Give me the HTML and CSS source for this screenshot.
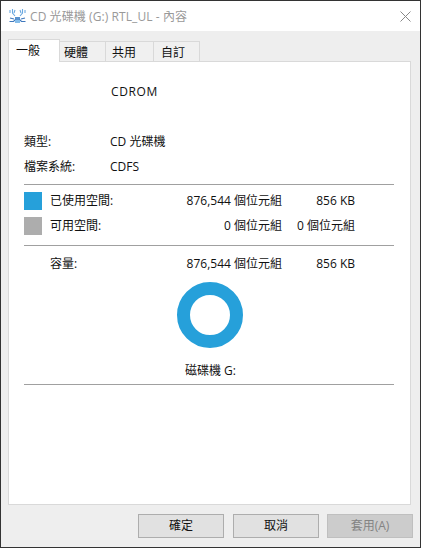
FILE: index.html
```html
<!DOCTYPE html>
<html lang="zh-Hant">
<head>
    <meta charset="UTF-8">
    <meta name="viewport" content="width=device-width, initial-scale=1.0">
    <title>CD 光碟機 (G:) RTL_UL - 內容</title>
    <link rel="stylesheet" href="styles.css">
</head>
<body>

<div class="window">
    <!-- Title bar -->
    <div class="titlebar">
        <svg class="app-icon" width="17" height="15" viewBox="0 0 17 15">
            <path d="M3.5 0v4l2.5 3M13.5 0v4l-2.5 3M1 1v3M16 1v3M6 1l-1 3M11 1l1 3" fill="none" stroke="#6aa8e0" stroke-width="1.1"/>
            <path d="M6 8h5v3h-5z" fill="#5b93cf"/>
            <path d="M0.5 12.5h4l2-2M16.5 12.5h-4l-2-2M1 9l4 1M16 9l-4 1" fill="none" stroke="#3f78bd" stroke-width="1.1"/>
            <rect x="6" y="11" width="5" height="3" fill="#86bdea"/>
        </svg>
        <span class="title">CD 光碟機 (G:) RTL_UL - 內容</span>
        <svg class="close" width="11" height="11" viewBox="0 0 11 11">
            <path d="M0.5 0.5l10 10M10.5 0.5l-10 10" stroke="#888" stroke-width="1" fill="none"/>
        </svg>
    </div>

    <div class="dialog">
        <!-- Tabs -->
        <div class="tabs">
            <div class="tab active">一般</div>
            <div class="tab">硬體</div>
            <div class="tab">共用</div>
            <div class="tab">自訂</div>
        </div>

        <div class="panel">
            <div class="name">CDROM</div>

            <div class="info-row"><span class="info-label">類型:</span><span>CD 光碟機</span></div>
            <div class="info-row fs"><span class="info-label">檔案系統:</span><span>CDFS</span></div>

            <div class="rule"></div>

            <div class="space-row">
                <span class="swatch used"></span>
                <span class="space-label">已使用空間:</span>
                <span class="bytes">876,544 個位元組</span>
                <span class="size">856 KB</span>
            </div>
            <div class="space-row">
                <span class="swatch free"></span>
                <span class="space-label">可用空間:</span>
                <span class="bytes">0 個位元組</span>
                <span class="size">0 個位元組</span>
            </div>

            <div class="rule rule-total"></div>

            <div class="space-row total-row">
                <span class="swatch blank"></span>
                <span class="space-label">容量:</span>
                <span class="bytes">876,544 個位元組</span>
                <span class="size">856 KB</span>
            </div>

            <div class="donut-wrap"><div class="donut"></div></div>
            <div class="drive">磁碟機 G:</div>
            <div class="rule rule-drive"></div>
        </div>

        <!-- Buttons -->
        <div class="buttons">
            <div class="btn">確定</div>
            <div class="btn">取消</div>
            <div class="btn disabled">套用(A)</div>
        </div>
    </div>
</div>

</body>
</html>
```

FILE: styles.css
```css
html, body {
    margin: 0;
    height: 100%;
    background-color: #333;
}
body {
    font-family: "Open Sans", "Noto Sans CJK TC", sans-serif;
    font-size: 12px;
    color: #111;
    overflow: hidden;
}
.window {
    box-sizing: border-box;
    width: 421px;
    height: 548px;
    padding: 1px 1px 1px 1px;
    display: flex;
    flex-direction: column;
}
.titlebar {
    height: 30px;
    flex: none;
    background: #fff;
    display: flex;
    align-items: center;
    padding: 0 9px 0 8px;
}
.app-icon {
    margin-right: 4px;
}
.title {
    flex: 1;
    color: #999;
    letter-spacing: 0.08px;
}
.dialog {
    flex: 1;
    display: flex;
    flex-direction: column;
    background: #eee;
    padding: 8px 9px 0 7px;
}
.tabs {
    display: flex;
    height: 22px;
    align-items: flex-end;
}
.tab {
    box-sizing: border-box;
    height: 20px;
    width: 46px;
    padding-left: 4px;
    border-top: 1px solid #d9d9d9;
    border-right: 1px solid #d9d9d9;
    background: #f0f0f0;
    line-height: 21px;
}
.tab:nth-child(3) {
    width: 48px;
    padding-left: 6px;
}
.tab:nth-child(4) {
    padding-left: 7px;
}
.tab.active {
    height: 23px;
    width: 52px;
    padding-left: 7px;
    border-left: 1px solid #d9d9d9;
    background: #fff;
    position: relative;
    top: 1px;
    z-index: 1;
}
.panel {
    flex: 1;
    background: #fff;
    border: 1px solid #d9d9d9;
    padding: 0 16px 0 15px;
}
.name {
    margin: 21px 0 0 87px;
    height: 17px;
    line-height: 17px;
    letter-spacing: 0.6px;
}
.info-row {
    display: flex;
    margin-top: 33px;
    line-height: 17px;
}
.info-row.fs {
    margin-top: 8px;
}
.info-label {
    width: 86px;
}
.rule {
    height: 1px;
    background: #a0a0a0;
    margin-top: 9px;
}
.rule-total {
    margin-top: 10px;
}
.rule-drive {
    margin-top: 5px;
}
.space-row {
    display: flex;
    align-items: center;
    height: 18px;
    margin-top: 7px;
}
.total-row {
    margin-top: 8px;
}
.swatch {
    width: 18px;
    height: 18px;
    margin-right: 8px;
    flex: none;
}
.swatch.used { background: #26a0da; }
.swatch.free { background: #adadad; }
.swatch.blank { background: transparent; }
.space-label {
    width: 90px;
    margin-bottom: 2px;
}
.bytes {
    width: 142px;
    text-align: right;
    margin-bottom: 2px;
}
.size {
    width: 73px;
    text-align: right;
    margin-bottom: 2px;
}
.total-row .space-label,
.total-row .bytes,
.total-row .size {
    margin-bottom: 0;
}
.donut-wrap {
    display: flex;
    justify-content: center;
    margin-top: 10px;
    padding-left: 1px;
}
.donut {
    box-sizing: border-box;
    width: 66px;
    height: 66px;
    border: 13px solid #26a0da;
    border-radius: 50%;
}
.drive {
    text-align: center;
    margin-top: 14px;
    padding-left: 3px;
    line-height: 17px;
}
.buttons {
    flex: none;
    height: 42px;
    display: flex;
    justify-content: flex-end;
    gap: 9px;
    padding: 9px 0 0 0;
    margin-right: -2px;
    box-sizing: border-box;
}
.btn {
    box-sizing: border-box;
    width: 86px;
    height: 24px;
    border: 1px solid #adadad;
    background: #e1e1e1;
    text-align: center;
    line-height: 21px;
}
.btn.disabled {
    margin-left: -1px;
    background: #ccc;
    border-color: #bfbfbf;
    color: #838383;
}
```
